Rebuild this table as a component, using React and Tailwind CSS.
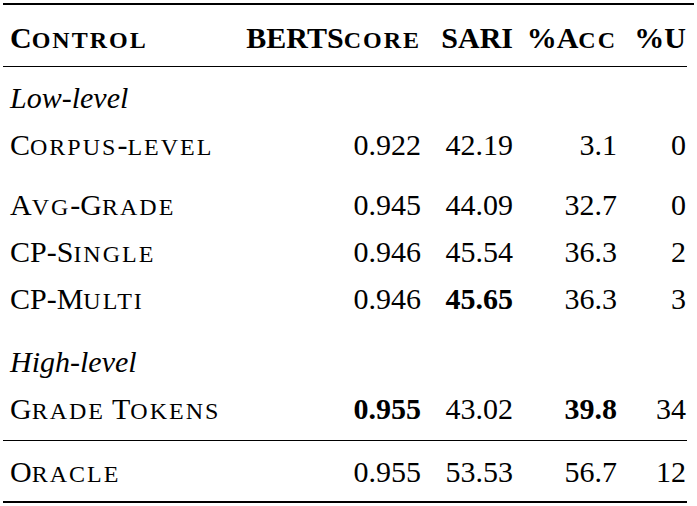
import React from "react";

const cols = "grid grid-cols-[227px_191px_92px_104px_69px] h-[47px] leading-[47px]";

const rows = [
  { label: "Corpus-level", vals: ["0.922", "42.19", "3.1", "0"] },
  { gap: true },
  { label: "Avg-Grade", vals: ["0.945", "44.09", "32.7", "0"] },
  { label: "CP-Single", vals: ["0.946", "45.54", "36.3", "2"] },
  { label: "CP-Multi", vals: ["0.946", "45.65", "36.3", "3"], bold: [1] },
];

// fake small caps: lowercase runs get uppercased at a smaller size
function SC({ text }) {
  const parts = text.match(/[a-z]+|[^a-z]+/g) || [];
  return (
    <>
      {parts.map((p, i) =>
        /^[a-z]/.test(p) ? (
          <span key={i} className="uppercase text-[24px] tracking-[2px]">
            {p}
          </span>
        ) : (
          <span key={i}>{p}</span>
        )
      )}
    </>
  );
}

function Row({ label, vals, bold = [], italic }) {
  return (
    <div className={cols}>
      <div className="pl-[7px] whitespace-nowrap">
        {italic ? <span className="italic">{label}</span> : <SC text={label} />}
      </div>
      {vals &&
        vals.map((v, i) => (
          <div
            key={i}
            className={"text-right " + (bold.includes(i) ? "font-bold" : "")}
          >
            {v}
          </div>
        ))}
    </div>
  );
}

export default function App() {
  return (
    <div className="w-[697px] h-[506px] bg-white px-[3px] pt-[3px] text-black text-[30px] font-['Liberation_Serif',serif]">
      <div className="border-t-2 border-black pr-[7px]">
        {/* header */}
        <div className="pt-[9px] pb-[5px] border-b border-black">
          <div className={cols + " font-bold"}>
            <div className="pl-[7px]">
              <SC text="Control" />
            </div>
            <div className="text-right whitespace-nowrap">
              <SC text="BERTScore" />
            </div>
            <div className="text-right">SARI</div>
            <div className="text-right whitespace-nowrap">
              <SC text="%Acc" />
            </div>
            <div className="text-right">%U</div>
          </div>
        </div>

        <div className="pt-[7px] pb-[8px] border-b border-black">
          <Row label="Low-level" italic />
          {rows.map((r, i) =>
            r.gap ? (
              <div key={i} className="h-[13px]" />
            ) : (
              <Row key={i} label={r.label} vals={r.vals} bold={r.bold} />
            )
          )}
          <div className="h-[16px]" />
          <Row label="High-level" italic />
          <Row
            label="Grade Tokens"
            vals={["0.955", "43.02", "39.8", "34"]}
            bold={[0, 2]}
          />
        </div>

        <div className="pt-[7px] pb-[6px] border-b-2 border-black">
          <Row label="Oracle" vals={["0.955", "53.53", "56.7", "12"]} />
        </div>
      </div>
    </div>
  );
}
